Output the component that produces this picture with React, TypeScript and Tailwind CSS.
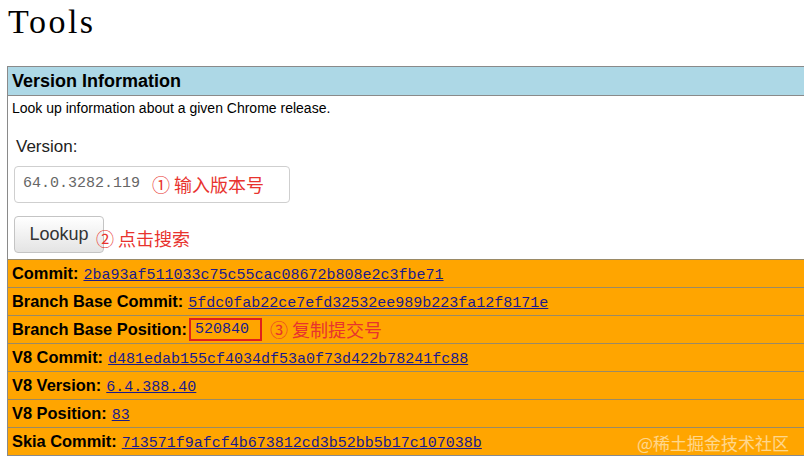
import React from "react";

const sans = "font-['Liberation_Sans','Noto_Sans_CJK_SC',sans-serif]";
const mono = "font-['Liberation_Mono','Noto_Sans_CJK_SC',monospace]";
const cjk = "font-['Noto_Sans_CJK_SC',sans-serif]";

type Row = { label: string; value: string; mark?: boolean };

const rows: Row[] = [
  { label: "Commit:", value: "2ba93af511033c75c55cac08672b808e2c3fbe71" },
  { label: "Branch Base Commit:", value: "5fdc0fab22ce7efd32532ee989b223fa12f8171e" },
  { label: "Branch Base Position:", value: "520840", mark: true },
  { label: "V8 Commit:", value: "d481edab155cf4034df53a0f73d422b78241fc88" },
  { label: "V8 Version:", value: "6.4.388.40" },
  { label: "V8 Position:", value: "83" },
  { label: "Skia Commit:", value: "713571f9afcf4b673812cd3b52bb5b17c107038b" },
];

const InfoRow = ({ row, last }: { row: Row; last: boolean }) => (
  <div className="relative flex h-[28px] items-center border-t border-[#9a8a66] bg-[#ffa500] pl-[4px]">
    {row.mark ? (
      <>
        <span className={`${sans} text-[16.4px] font-bold text-black`}>{row.label}</span>
        <span className="ml-[2px] flex h-[23px] w-[73px] items-center border-2 border-[#e0201c] pl-[4px]">
          <a className={`${mono} relative top-[1px] text-[15px] text-[#1a1a8c]`}>{row.value}</a>
        </span>
        <span className={`${cjk} ml-[8px] text-[18px] text-[#e8332e]`}>③ 复制提交号</span>
      </>
    ) : (
      <p className="pt-[2px] leading-[20px]">
        <span className={`${sans} text-[16.4px] font-bold text-black`}>{row.label}</span>
        <a className={`${mono} ml-[5px] text-[15px] text-[#1a1a8c] underline underline-offset-[1px]`}>
          {row.value}
        </a>
      </p>
    )}
    {last && (
      <span className={`${cjk} absolute left-[629px] top-[2px] text-[17px] text-white/55`}>
        @稀土掘金技术社区
      </span>
    )}
  </div>
);

export default function App() {
  return (
    <div className="h-[468px] w-[804px] overflow-hidden bg-white">
      <h1 className="h-[66px] pl-[8px] pt-[5px] font-['Liberation_Serif',serif] text-[34px] leading-none tracking-[2.5px] text-black">
        Tools
      </h1>
      <div className="ml-[7px] w-[830px] border border-[#8a8a8a]">
        <div className={`${sans} flex h-[28px] items-center bg-[#add8e6] pl-[4px] text-[18px] font-bold text-black`}>
          Version Information
        </div>
        <div className="border-t border-[#8a8a8a] pl-[4px] pt-[2px] pb-[6px]">
          <p className={`${sans} text-[14px] leading-[20px] text-black`}>
            Look up information about a given Chrome release.
          </p>
          <div className="ml-[2px] mt-[18px]">
            <label className={`${sans} block pl-[2px] text-[17px] leading-[22px] text-[#222]`}>Version:</label>
            <div className="mt-[8px] flex h-[37px] w-[276px] items-center rounded-[4px] border border-[#cfcfcf] pl-[8px]">
              <span className={`${mono} text-[15px] text-[#666]`}>64.0.3282.119</span>
              <span className={`${cjk} ml-[12px] text-[18px] text-[#e8332e]`}>① 输入版本号</span>
            </div>
            <div className="mt-[13px] flex items-center">
              <button className={`${sans} h-[37px] w-[90px] rounded-[4px] border border-[#c4c4c4] bg-gradient-to-b from-white to-[#e4e4e4] text-[18px] text-[#333]`}>
                Lookup
              </button>
              <span className={`${cjk} relative top-[4px] -ml-[8px] text-[18px] text-[#e8332e]`}>② 点击搜索</span>
            </div>
          </div>
        </div>
        {rows.map((r, i) => (
          <InfoRow key={r.label} row={r} last={i === rows.length - 1} />
        ))}
      </div>
    </div>
  );
}
